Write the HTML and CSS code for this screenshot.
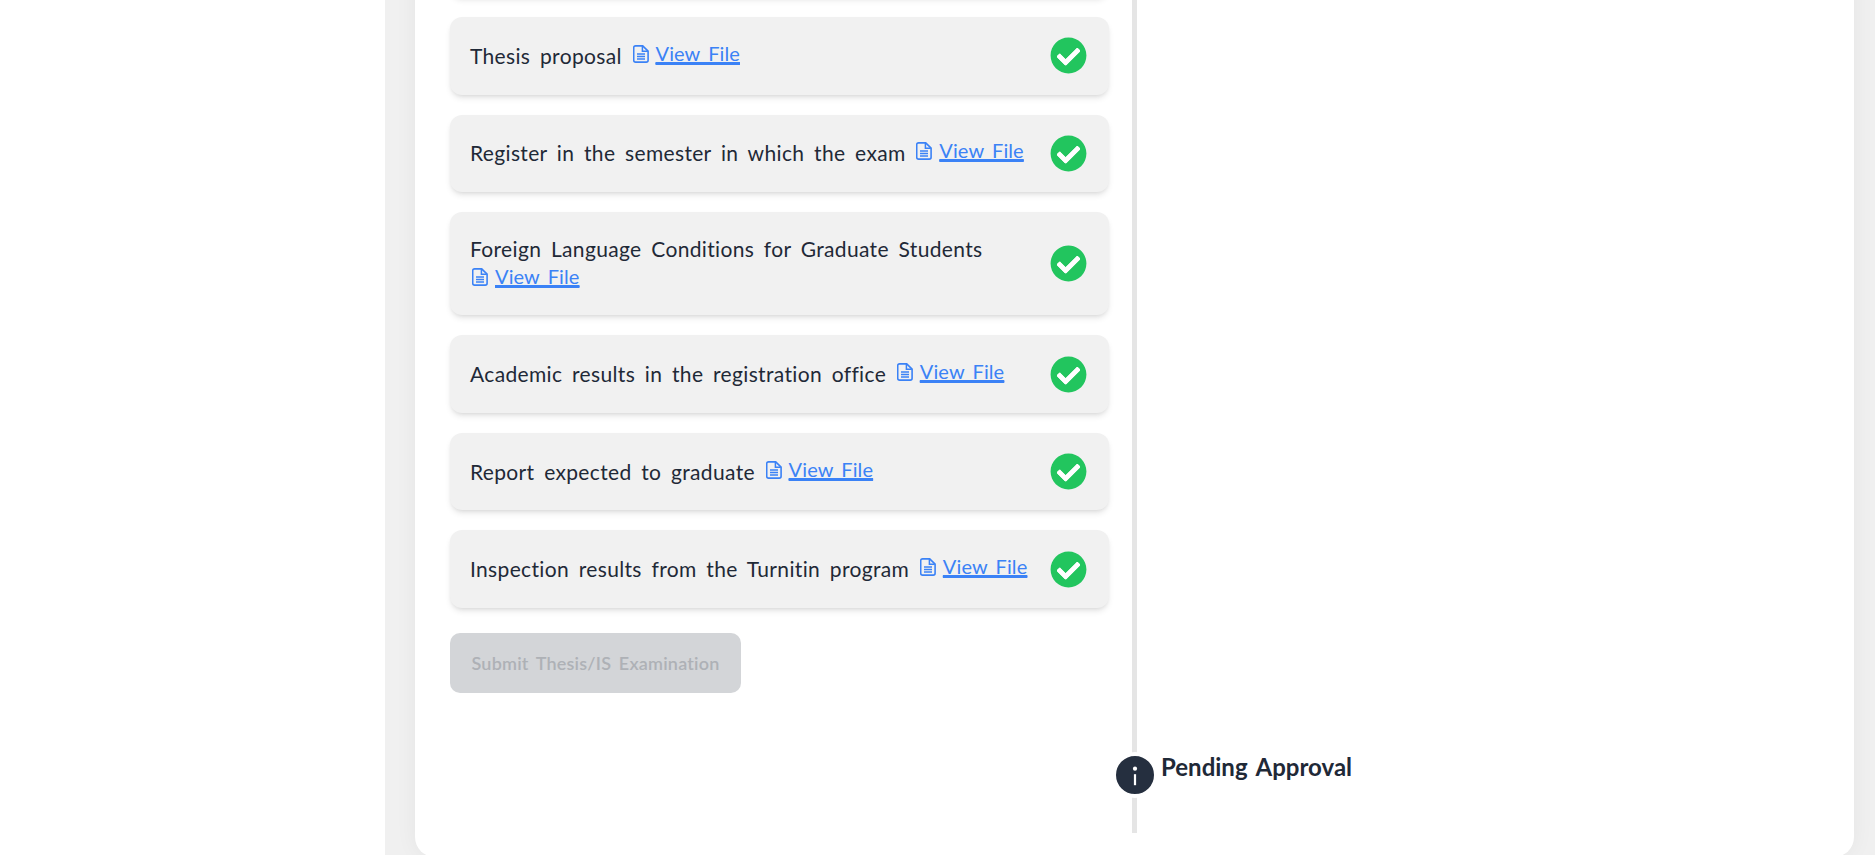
FILE: index.html
```html
<!DOCTYPE html>
<html lang="en">
<head>
<meta charset="utf-8">
<title>Thesis examination</title>
<link rel="stylesheet" href="styles.css">
</head>
<body>
<svg class="sprite" width="0" height="0" aria-hidden="true">
  <symbol id="doc" viewBox="0 0 16 18">
    <path d="M2.5 .9h7.2l5.4 5.3v9.1a1.8 1.8 0 0 1-1.8 1.8H2.5A1.8 1.8 0 0 1 .7 15.3V2.7A1.8 1.8 0 0 1 2.5 .9z" fill="none" stroke="currentColor" stroke-width="1.6"/>
    <path d="M9.4 1v5.2h5.4M4 9h8M4 11.5h8M4 14h8" fill="none" stroke="currentColor" stroke-width="1.5"/>
  </symbol>
  <symbol id="ok" viewBox="0 0 512 512">
    <path fill="#22c55e" fill-rule="evenodd" d="M504 256c0 136.967-111.033 248-248 248S8 392.967 8 256 119.033 8 256 8s248 111.033 248 248zM227.314 387.314l184-184c6.248-6.248 6.248-16.379 0-22.627l-22.627-22.627c-6.248-6.249-16.379-6.249-22.628 0L216 308.118l-70.059-70.059c-6.248-6.248-16.379-6.248-22.628 0l-22.627 22.627c-6.248 6.248-6.248 16.379 0 22.627l104 104c6.249 6.249 16.379 6.249 22.628.001z"/>
    <path fill="#fff" d="M227.314 387.314l184-184c6.248-6.248 6.248-16.379 0-22.627l-22.627-22.627c-6.248-6.249-16.379-6.249-22.628 0L216 308.118l-70.059-70.059c-6.248-6.248-16.379-6.248-22.628 0l-22.627 22.627c-6.248 6.248-6.248 16.379 0 22.627l104 104c6.249 6.249 16.379 6.249 22.628.001z"/>
  </symbol>
</svg>
<div class="shell">
  <main class="panel">
    <section class="checklist">
      <div class="card card-prev"></div>
      <div class="card card-one">
        <p class="label">Thesis proposal <a class="file" href="#"><svg class="doc"><use href="#doc"/></svg><span class="file-text">View File</span></a></p>
        <svg class="ok"><use href="#ok"/></svg>
      </div>
      <div class="card card-one">
        <p class="label">Register in the semester in which the exam <a class="file" href="#"><svg class="doc"><use href="#doc"/></svg><span class="file-text">View File</span></a></p>
        <svg class="ok"><use href="#ok"/></svg>
      </div>
      <div class="card card-two">
        <p class="label">Foreign Language Conditions for Graduate Students<br><a class="file file-wrapped" href="#"><svg class="doc"><use href="#doc"/></svg><span class="file-text">View File</span></a></p>
        <svg class="ok"><use href="#ok"/></svg>
      </div>
      <div class="card card-one">
        <p class="label">Academic results in the registration office <a class="file" href="#"><svg class="doc"><use href="#doc"/></svg><span class="file-text">View File</span></a></p>
        <svg class="ok"><use href="#ok"/></svg>
      </div>
      <div class="card card-one">
        <p class="label">Report expected to graduate <a class="file" href="#"><svg class="doc"><use href="#doc"/></svg><span class="file-text">View File</span></a></p>
        <svg class="ok"><use href="#ok"/></svg>
      </div>
      <div class="card card-one">
        <p class="label">Inspection results from the Turnitin program <a class="file" href="#"><svg class="doc"><use href="#doc"/></svg><span class="file-text">View File</span></a></p>
        <svg class="ok"><use href="#ok"/></svg>
      </div>
      <button class="submit" disabled>Submit Thesis/IS Examination</button>
    </section>
    <aside class="timeline">
      <div class="step">
        <span class="step-dot">
          <svg viewBox="0 0 38 38" width="38" height="38"><circle cx="19" cy="12.7" r="2.1" fill="#fff"/><rect x="17.9" y="18.2" width="2.2" height="11" fill="#fff"/></svg>
        </span>
        <span class="step-title">Pending Approval</span>
      </div>
    </aside>
  </main>
</div>
</body>
</html>
```
FILE: styles.css
```css
* { box-sizing: border-box; }
html, body { margin: 0; height: 100%; background: #fff; }
body {
  height: 855px;
  overflow: hidden;
  display: flex;
  flex-direction: column;
  justify-content: flex-end;
  font-family: "Lato", "Noto Sans", sans-serif;
  color: #1f2937;
}
.sprite { position: absolute; }
.shell {
  flex-shrink: 0;
  margin-left: 385px;
  padding: 0 21px 0 30px;
  background: #f0f0f0;
  margin-bottom: -2px;
}
.panel {
  display: flex;
  background: #fff;
  border-radius: 0 0 20px 20px;
  padding-bottom: 24px;
  box-shadow: 0 0 22px rgba(0, 0, 0, .05);
}
.checklist {
  width: 717px;
  flex-shrink: 0;
  display: flex;
  flex-direction: column;
  gap: 20px;
  padding: 0 23px 140px 35px;
}
.card {
  display: flex;
  align-items: center;
  justify-content: space-between;
  padding: 0 22px 0 20px;
  background: #f1f1f1;
  border-radius: 12px;
  box-shadow: 0 4px 6px -1px rgba(0, 0, 0, .1), 0 2px 4px -2px rgba(0, 0, 0, .1);
}
.card-prev { height: 60px; flex-shrink: 0; }
.card-one { height: 77.6px; flex-shrink: 0; }
.card-two { height: 103px; flex-shrink: 0; }
.label {
  margin: 0;
  font-size: 21px;
  line-height: 30px;
  word-spacing: 4px;
  letter-spacing: .34px;
  color: #1f2937;
}
.file {
  margin-left: 1px;
  color: #3b82f6;
  font-size: 20px;
  line-height: 20px;
  letter-spacing: .1px;
  word-spacing: 3px;
  vertical-align: 3px;
  white-space: nowrap;
}
.file-wrapped { margin-left: 2px; }
.doc {
  width: 16px;
  height: 18px;
  margin-right: 7px;
  vertical-align: -2px;
}
.file-text {
  text-decoration: underline;
  text-decoration-thickness: 1.5px;
  text-underline-offset: 2px;
}
.ok { width: 37px; height: 37px; flex-shrink: 0; }
.submit {
  align-self: flex-start;
  width: 291px;
  height: 60px;
  margin-top: 5px;
  border: 0;
  border-radius: 10px;
  background: #d3d5d8;
  color: #aeb1b6;
  font: 600 18px "Lato", "Noto Sans", sans-serif;
  word-spacing: 3px;
  letter-spacing: .2px;
}
.timeline {
  flex: 1;
  display: flex;
  flex-direction: column;
  justify-content: flex-end;
  border-left: 5px solid #e5e5e5;
}
.step {
  display: flex;
  align-items: flex-start;
  margin-left: -25px;
  padding-bottom: 39px;
}
.step-dot {
  width: 46px;
  height: 46px;
  margin: 0 0 -4px 0;
  flex-shrink: 0;
  display: flex;
  align-items: center;
  justify-content: center;
  border: 4px solid #fff;
  border-radius: 50%;
  background: #252f3f;
}
.step-dot svg { flex-shrink: 0; }
.step-title {
  margin-left: 3px;
  font-size: 24px;
  line-height: 30px;
  font-weight: 700;
  word-spacing: 3px;
  color: #1f2937;
}
```
